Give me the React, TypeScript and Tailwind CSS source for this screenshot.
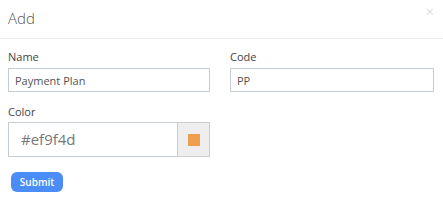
export default function App() {
  return (
    <div className="w-[443px] h-[205px] bg-white font-['Open_Sans',sans-serif] text-[#555]">
      <div className="flex items-start justify-between h-[39px] border-b border-[#ececec] pl-[8px] pr-[9px]">
        <h3 className="mt-[8px] text-[15px] leading-[20px] font-light text-[#555]">Add</h3>
        <button className="mt-[4px] text-[15px] leading-[15px] font-light text-[#cfcfcf]">×</button>
      </div>

      <div className="pl-[8px] pr-[9px] pt-[10px]">
        <div className="grid grid-cols-[202px_204px] gap-x-[20px]">
          <div>
            <label className="block text-[11px] leading-[16px] text-[#444]">Name</label>
            <input
              className="mt-[3px] block w-full h-[24px] border border-[#c5ccd6] px-[6px] text-[11px] text-[#555] outline-none"
              defaultValue="Payment Plan"
            />
          </div>
          <div>
            <label className="block text-[11px] leading-[16px] text-[#444]">Code</label>
            <input
              className="mt-[3px] block w-full h-[24px] border border-[#c5ccd6] px-[6px] text-[11px] text-[#555] outline-none"
              defaultValue="PP"
            />
          </div>
        </div>

        <div className="mt-[12px] w-[202px]">
          <label className="block text-[11px] leading-[16px] text-[#444]">Color</label>
          <div className="mt-[2px] flex h-[35px]">
            <input
              className="flex-1 min-w-0 border border-[#c5ccd6] pl-[12px] text-[15px] text-[#777] outline-none"
              defaultValue="#ef9f4d"
            />
            <span className="w-[32px] flex items-center justify-center border border-l-0 border-[#ccc] bg-[#eee]">
              <span className="w-[12px] h-[12px] bg-[#ef9f4d]" />
            </span>
          </div>
        </div>

        <button className="mt-[15px] ml-[3px] w-[52px] h-[20px] rounded-[6px] bg-[#4b8df8] text-white text-[10px] font-semibold">
          Submit
        </button>
      </div>
    </div>
  );
}
